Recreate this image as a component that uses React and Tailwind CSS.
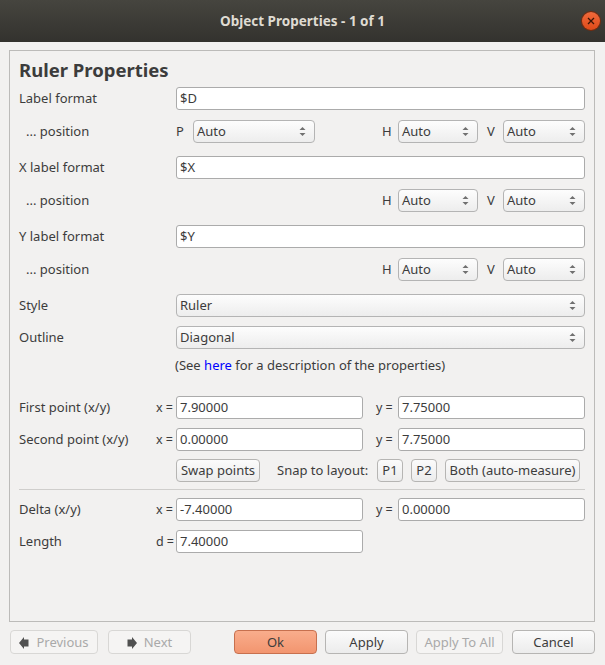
import React from 'react';

const TEXT = 'text-[#3c3c3c]';

// small up/down arrows used by the combo boxes
const SpinArrows = () => (
  <svg width="7" height="13" viewBox="0 0 7 13" className="shrink-0">
    <path d="M0.5 5 L3.5 2 L6.5 5 Z" fill="#707070" />
    <path d="M0.5 8 L6.5 8 L3.5 11 Z" fill="#707070" />
  </svg>
);

const Input = ({ value, className = '' }) => (
  <div
    className={`flex h-[23px] shrink-0 items-center rounded-[3px] border border-[#ababab] bg-white pl-[3px] pt-[1px] ${className}`}
  >
    {value}
  </div>
);

const Select = ({ value, className = '' }) => (
  <div
    className={`flex h-[23px] shrink-0 items-center justify-between rounded-[4px] border border-[#b4b4b4] bg-gradient-to-b from-[#fdfdfd] to-[#ededed] pl-[3px] pr-[8px] ${className}`}
  >
    <span className="pt-[1px]">{value}</span>
    <SpinArrows />
  </div>
);

const Button = ({ children, className = '', variant = 'normal' }) => {
  const styles = {
    normal: 'border-[#b6b5b3] bg-gradient-to-b from-[#fbfbfb] to-[#ececec] text-[#3c3c3c]',
    ok: 'border-[#c7704e] bg-gradient-to-b from-[#f9ad8c] to-[#f2956f] text-[#3c3c3c]',
    disabled: 'border-[#d8d7d5] bg-[#f5f4f3] text-[#a9a9a9]',
  };
  return (
    <div
      className={`flex shrink-0 items-center justify-center whitespace-nowrap rounded-[4px] border pt-[1px] ${styles[variant]} ${className}`}
    >
      {children}
    </div>
  );
};

const ArrowLeft = () => (
  <svg width="10" height="12" viewBox="0 0 10 12" className="mr-[7px]">
    <path d="M0 6 L5 0 L5 2.5 L9.5 2.5 L9.5 9.5 L5 9.5 L5 12 Z" fill="#505050" />
  </svg>
);

const ArrowRight = () => (
  <svg width="10" height="12" viewBox="0 0 10 12" className="mr-[7px]">
    <path d="M10 6 L5 0 L5 2.5 L0.5 2.5 L0.5 9.5 L5 9.5 L5 12 Z" fill="#505050" />
  </svg>
);

// "x =" style small label
const Eq = ({ v }) => (
  <span className="flex items-center pt-[1px] text-[12.5px]">
    {v}
    <span className="ml-[3px]">=</span>
  </span>
);

// label + full width field row
const FieldRow = ({ label, children, className = '', indent = false }) => (
  <div className={`flex items-center ${className}`}>
    <div className={`w-[157px] shrink-0 pt-[1px] ${indent ? 'pl-[7px]' : ''}`}>{label}</div>
    <div className="w-[409px]">{children}</div>
  </div>
);

const PositionRow = ({ withP = false, className = '' }) => (
  <FieldRow label="... position" indent className={className}>
    <div className="flex items-center">
      {withP ? (
        <>
          <span className="w-[17px] pt-[1px]">P</span>
          <Select value="Auto" className="w-[122px]" />
        </>
      ) : null}
      <div className="flex-1" />
      <span className="w-[16px] pt-[1px]">H</span>
      <Select value="Auto" className="w-[80px]" />
      <span className="w-[25px] pl-[9px] pt-[1px]">V</span>
      <Select value="Auto" className="w-[82px]" />
    </div>
  </FieldRow>
);

const PointRow = ({ label, xLabel = 'x', x, y, className = '' }) => (
  <div className={`flex items-center whitespace-nowrap ${className}`}>
    <div className="w-[137px] shrink-0 pt-[1px]">{label}</div>
    <div className="w-[20px] shrink-0">
      <Eq v={xLabel} />
    </div>
    <Input value={x} className="w-[187px]" />
    {y !== undefined && (
      <>
        <div className="w-[35px] shrink-0 pl-[13px]">
          <Eq v="y" />
        </div>
        <Input value={y} className="w-[187px]" />
      </>
    )}
  </div>
);

export default function App() {
  return (
    <div
      className={`flex h-[665px] w-[605px] flex-col bg-[#f2f1f0] font-['Noto_Sans',sans-serif] text-[13px] ${TEXT}`}
    >
      {/* Title bar */}
      <div className="relative flex h-[42px] shrink-0 items-center justify-center bg-gradient-to-b from-[#46453f] to-[#33322e]">
        <span className="text-[13.5px] font-bold text-[#dfdbd2]">Object Properties - 1 of 1</span>
        <div className="absolute right-[5px] top-[12px] flex h-[18px] w-[18px] items-center justify-center rounded-full bg-gradient-to-b from-[#f0693a] to-[#df4a17] shadow-[0_0_0_1px_#7a2a0c]">
          <svg width="8" height="8" viewBox="0 0 8 8">
            <path d="M1 1 L7 7 M7 1 L1 7" stroke="#3a1406" strokeWidth="1.3" />
          </svg>
        </div>
      </div>

      {/* Group box */}
      <div className="ml-[9px] mt-[8px] h-[572px] w-[586px] border border-[#bcbbb9] px-[9px] pt-[9px]">
        <div className="h-[20px] text-[18.5px] font-bold leading-[20px]">Ruler Properties</div>

        <FieldRow label="Label format" className="mt-[7px]">
          <Input value="$D" />
        </FieldRow>
        <PositionRow withP className="mt-[10px]" />

        <FieldRow label="X label format" className="mt-[13px]">
          <Input value="$X" />
        </FieldRow>
        <PositionRow className="mt-[10px]" />

        <FieldRow label="Y label format" className="mt-[13px]">
          <Input value="$Y" />
        </FieldRow>
        <PositionRow className="mt-[10px]" />

        <FieldRow label="Style" className="mt-[13px]">
          <Select value="Ruler" />
        </FieldRow>
        <FieldRow label="Outline" className="mt-[9px]">
          <Select value="Diagonal" />
        </FieldRow>

        <div className="mt-[7px] flex h-[18px] items-center pl-[156px] pt-[1px]">
          <span>
            (See <span className="text-[#0000ff]">here</span> for a description of the properties)
          </span>
        </div>

        <PointRow label="First point (x/y)" x="7.90000" y="7.75000" className="mt-[22px]" />
        <PointRow label="Second point (x/y)" x="0.00000" y="7.75000" className="mt-[9px]" />

        <div className="mt-[8px] flex h-[23px] items-center whitespace-nowrap pl-[157px]">
          <Button className="h-[23px] w-[84px]">Swap points</Button>
          <span className="ml-[17px] w-[100px] pt-[1px]">Snap to layout:</span>
          <Button className="h-[23px] w-[26px]">P1</Button>
          <Button className="ml-[8px] h-[23px] w-[26px]">P2</Button>
          <Button className="ml-[8px] h-[23px] w-[135px]">Both (auto-measure)</Button>
        </div>

        <div className="mt-[7px] h-[1px] bg-[#cfcecc]" />

        <PointRow label="Delta (x/y)" x="-7.40000" y="0.00000" className="mt-[8px]" />
        <PointRow label="Length" xLabel="d" x="7.40000" className="mt-[9px]" />
      </div>

      {/* Bottom buttons */}
      <div className="mt-[8px] flex h-[24px] items-stretch pl-[10px]">
        <Button variant="disabled" className="w-[88px]">
          <ArrowLeft />
          Previous
        </Button>
        <Button variant="disabled" className="ml-[10px] w-[83px]">
          <ArrowRight />
          Next
        </Button>
        <Button variant="ok" className="ml-[43px] w-[83px]">
          Ok
        </Button>
        <Button className="ml-[8px] w-[83px]">Apply</Button>
        <Button variant="disabled" className="ml-[8px] w-[87px]">
          Apply To All
        </Button>
        <Button className="ml-[9px] w-[83px]">Cancel</Button>
      </div>
    </div>
  );
}
